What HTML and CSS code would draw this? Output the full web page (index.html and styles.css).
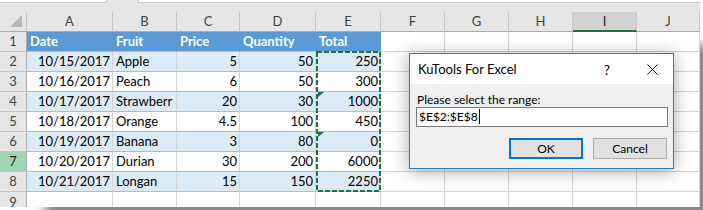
FILE: index.html
```html
<!DOCTYPE html>
<html>
<head>
<meta charset="utf-8">
<link rel="stylesheet" href="styles.css">
</head>
<body>
<div class="frame">
  <div class="top"><div class="namebox"></div><div class="fx"></div></div>
  <div class="row colhdr">
    <div class="corner"><span class="tri"></span></div><div>A</div><div>B</div><div>C</div><div>D</div><div>E</div><div>F</div><div>G</div><div>H</div><div class="sel">I</div><div>J</div>
  </div>
  <div class="row hdr">
    <div class="h">1</div><div class="t">Date</div><div class="t">Fruit</div><div class="t">Price</div><div class="t">Quantity</div><div class="t">Total</div><div></div><div></div><div></div><div></div><div></div>
  </div>
  <div class="row band">
    <div class="h">2</div><div class="t n">10/15/2017</div><div class="t">Apple</div><div class="t n">5</div><div class="t n">50</div><div class="t n">250</div><div></div><div></div><div></div><div></div><div></div>
  </div>
  <div class="row">
    <div class="h">3</div><div class="t n">10/16/2017</div><div class="t">Peach</div><div class="t n">6</div><div class="t n">50</div><div class="t n">300</div><div></div><div></div><div></div><div></div><div></div>
  </div>
  <div class="row band">
    <div class="h">4</div><div class="t n">10/17/2017</div><div class="t">Strawberr</div><div class="t n">20</div><div class="t n">30</div><div class="t n err">1000</div><div></div><div></div><div></div><div></div><div></div>
  </div>
  <div class="row">
    <div class="h">5</div><div class="t n">10/18/2017</div><div class="t">Orange</div><div class="t n">4.5</div><div class="t n">100</div><div class="t n">450</div><div></div><div></div><div></div><div></div><div></div>
  </div>
  <div class="row band">
    <div class="h">6</div><div class="t n">10/19/2017</div><div class="t">Banana</div><div class="t n">3</div><div class="t n">80</div><div class="t n err">0</div><div></div><div></div><div></div><div></div><div></div>
  </div>
  <div class="row">
    <div class="h sel">7</div><div class="t n">10/20/2017</div><div class="t">Durian</div><div class="t n">30</div><div class="t n">200</div><div class="t n">6000</div><div></div><div></div><div></div><div></div><div></div>
  </div>
  <div class="row band">
    <div class="h">8</div><div class="t n">10/21/2017</div><div class="t">Longan</div><div class="t n">15</div><div class="t n">150</div><div class="t n">2250</div><div></div><div></div><div></div><div></div><div></div>
  </div>
  <div class="row last">
    <div class="h">9</div><div></div><div></div><div></div><div></div><div></div><div></div><div></div><div></div><div></div><div></div>
  </div>

  <svg class="marquee" width="65" height="141" viewBox="0 0 65 141">
    <rect x="1" y="1" width="63" height="139" fill="none" stroke="#217346" stroke-width="2" stroke-dasharray="5 2"/>
  </svg>

  <div class="dlg">
    <div class="title">
      <span class="ttext">KuTools For Excel</span>
      <span class="q">?</span>
      <span class="x"><svg width="11" height="11" viewBox="0 0 11 11"><path d="M0.5 0.5L10.5 10.5M10.5 0.5L0.5 10.5" stroke="#111" stroke-width="1"/></svg></span>
    </div>
    <div class="body">
      <div class="label">Please select the range:</div>
      <div class="input"><span class="val">$E$2:$E$8</span></div>
      <div class="btns"><div class="btn ok">OK</div><div class="btn">Cancel</div></div>
    </div>
  </div>
</div>
</body>
</html>
```

FILE: styles.css
```css
:root {
  --cols: 27px 86px 64px 63px 76px 65px 64px 64px 64px 64px 63px;
}
html, body {
  margin: 0;
  padding: 0;
}
body {
  width: 703px;
  height: 210px;
  overflow: hidden;
  background: #fff;
  font-family: Lato, "Liberation Sans", sans-serif;
}
.frame {
  position: relative;
  width: 700px;
  height: 207px;
  overflow: hidden;
  background: #fff;
  box-shadow: 45px 45px 10px #8a8a8a;
}
.top {
  height: 12px;
  display: flex;
  background: #e6e6e6;
  box-sizing: border-box;
}
.namebox {
  width: 107px;
  height: 3px;
  box-sizing: border-box;
  background: #fff;
  border-right: 1px solid #c6c6c6;
  border-bottom: 1px solid #c6c6c6;
}
.fx {
  margin-left: 31px;
  flex: 1;
  height: 3px;
  box-sizing: border-box;
  background: #fff;
  border-left: 1px solid #c6c6c6;
  border-bottom: 1px solid #c6c6c6;
}
.row {
  display: grid;
  grid-template-columns: var(--cols);
  height: 20px;
}
.row > div {
  box-sizing: border-box;
  border-right: 1px solid #d4d4d4;
  border-bottom: 1px solid #d4d4d4;
  padding: 0 2px 0 3px;
  line-height: 19px;
  font-size: 13px;
  color: #000;
  white-space: nowrap;
  overflow: hidden;
}
.row.last > div {
  line-height: 21px;
}
.colhdr > div {
  background: #e6e6e6;
  text-align: center;
  color: #444;
  border-right-color: #c6c6c6;
  border-bottom-color: #ababab;
  padding: 0;
}
.colhdr .sel {
  background: #d2d2d2;
  border-bottom: 2px solid #217346;
  color: #222;
}
.corner {
  position: relative;
}
.tri {
  position: absolute;
  right: 4px;
  bottom: 4px;
  width: 0;
  height: 0;
  border-left: 12px solid transparent;
  border-bottom: 12px solid #b8b8b8;
}
.row .h {
  background: #e6e6e6;
  text-align: center;
  color: #444;
  padding: 0;
  border-right-color: #ababab;
  border-bottom-color: #c6c6c6;
}
.row .h.sel {
  background: #9fd5b7;
  color: #222;
}
.row .t {
  border-bottom-color: #9bc2e6;
}
.band .t {
  background: #ddebf7;
}
.hdr .t {
  background: #5b9bd5;
  color: #fff;
  font-weight: bold;
  border-right-color: #5b9bd5;
}
.row .n {
  text-align: right;
}
.row .err {
  position: relative;
}
.err::before {
  content: "";
  position: absolute;
  left: 2px;
  top: 0;
  width: 0;
  height: 0;
  border-top: 5px solid #217346;
  border-right: 6px solid transparent;
}
.marquee {
  position: absolute;
  left: 316px;
  top: 51px;
}
.dlg {
  position: absolute;
  left: 409px;
  top: 53px;
  width: 265px;
  height: 116px;
  box-sizing: border-box;
  border: 1px solid #1883d7;
  background: #f0f0f0;
  box-shadow: 0 2px 16px rgba(0, 0, 0, 0.35);
  font-family: Lato, "Noto Sans", sans-serif;
  font-size: 12px;
  color: #000;
  display: flex;
  flex-direction: column;
}
.title {
  height: 30px;
  background: #fff;
  display: flex;
  align-items: center;
  padding-left: 8px;
}
.ttext {
  font-size: 13px;
}
.q {
  margin-left: auto;
  width: 20px;
  text-align: center;
  font-size: 14px;
}
.x {
  margin-left: 14px;
  width: 42px;
  display: flex;
  justify-content: center;
  align-items: center;
}
.body {
  flex: 1;
  padding: 8px 5px 0 6px;
  display: flex;
  flex-direction: column;
}
.label {
  height: 15px;
  line-height: 15px;
  padding-left: 1px;
}
.input {
  height: 20px;
  box-sizing: border-box;
  background: #fff;
  border: 1px solid #7a7a7a;
  padding-left: 2px;
  line-height: 18px;
}
.val {
  border-right: 1px solid #000;
  padding-right: 1px;
}
.btns {
  margin-top: 11px;
  display: flex;
  justify-content: flex-end;
  gap: 10px;
  padding-right: 1px;
}
.btn {
  width: 74px;
  height: 21px;
  box-sizing: border-box;
  background: #e1e1e1;
  border: 1px solid #adadad;
  text-align: center;
  line-height: 19px;
}
.btn.ok {
  border: 2px solid #0078d7;
  line-height: 17px;
}
```
